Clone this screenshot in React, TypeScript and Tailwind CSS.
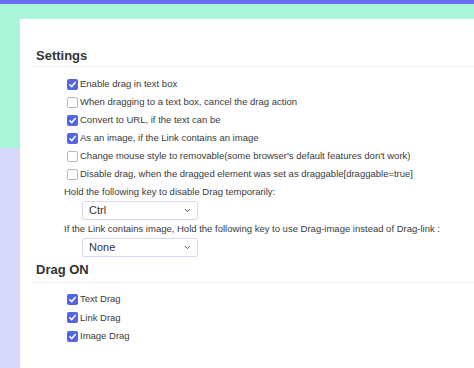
import React from 'react';
import { ChevronDown } from 'lucide-react';

const font = { fontFamily: '"Liberation Sans", Arial, sans-serif' };

const Box: React.FC<{ checked?: boolean }> = ({ checked }) =>
  checked ? (
    <span className="mr-[2px] flex h-[11px] w-[11px] items-center justify-center rounded-[2px] bg-[#5266e3]">
      <svg viewBox="0 0 12 12" className="h-[9px] w-[9px]" fill="none" stroke="#fff" strokeWidth="2" strokeLinecap="round" strokeLinejoin="round">
        <path d="M2.5 6.3 L5 8.8 L9.6 3.2" />
      </svg>
    </span>
  ) : (
    <span className="mr-[2px] h-[11px] w-[11px] rounded-[2px] border border-[#b9b9b9] bg-white" />
  );

const CheckRow: React.FC<{ label: string; checked?: boolean; h?: string }> = ({ label, checked, h = 'h-[18px]' }) => (
  <div className={`flex items-center pl-[47px] ${h}`}>
    <Box checked={checked} />
    <span className="text-[9.5px] text-[#3a3a3a]">{label}</span>
  </div>
);

const FakeSelect: React.FC<{ value: string }> = ({ value }) => (
  <div className="ml-[62px] flex h-[19px] w-[116px] items-center justify-between rounded-[2px] border border-[#d9d9f3] bg-white pl-[6px] pr-[5px]">
    <span className="text-[11px] text-[#333]">{value}</span>
    <ChevronDown size={9} strokeWidth={2.5} className="text-[#444]" />
  </div>
);

const TextRow: React.FC<{ children: React.ReactNode }> = ({ children }) => (
  <div className="flex h-[18px] items-center pl-[44px] text-[9.5px] text-[#3a3a3a]">{children}</div>
);

const SectionTitle: React.FC<{ title: string; className?: string }> = ({ title, className }) => (
  <div className={`ml-[13px] flex items-center border-b border-[#eeeef2] pl-[3px] text-[13px] font-bold text-[#333] ${className ?? ''}`}>
    {title}
  </div>
);

export default function App() {
  return (
    <div className="flex h-[368px] w-full flex-col overflow-hidden bg-white" style={font}>
      <div className="h-[4px] bg-[#6b6cf0]" />
      <div className="flex flex-1">
        {/* left strip */}
        <div className="flex w-[20px] flex-col">
          <div className="h-[144px] bg-[#abf5db]" />
          <div className="flex-1 bg-[#d6d7fb]" />
        </div>
        <div className="flex flex-1 flex-col">
          <div className="h-[15px] bg-[#abf5db]" />
          <div className="flex-1 bg-white">
            <SectionTitle title="Settings" className="mt-[24px] h-[24px] pt-[3px]" />
            <div className="mt-[8px]">
              <CheckRow label="Enable drag in text box" checked />
              <CheckRow label="When dragging to a text box, cancel the drag action" />
              <CheckRow label="Convert to URL, if the text can be" checked />
              <CheckRow label="As an image, if the Link contains an image" checked />
              <CheckRow label="Change mouse style to removable(some browser's default features don't work)" />
              <CheckRow label="Disable drag, when the dragged element was set as draggable[draggable=true]" />
            </div>
            <TextRow>Hold the following key to disable Drag temporarily:</TextRow>
            <FakeSelect value="Ctrl" />
            <TextRow>If the Link contains image, Hold the following key to use Drag-image instead of Drag-link :</TextRow>
            <FakeSelect value="None" />
            <SectionTitle title="Drag ON" className="h-[26px]" />
            <div className="mt-[7px]">
              <CheckRow label="Text Drag" checked h="h-[18.5px]" />
              <CheckRow label="Link Drag" checked h="h-[18.5px]" />
              <CheckRow label="Image Drag" checked h="h-[18.5px]" />
            </div>
          </div>
        </div>
      </div>
    </div>
  );
}
